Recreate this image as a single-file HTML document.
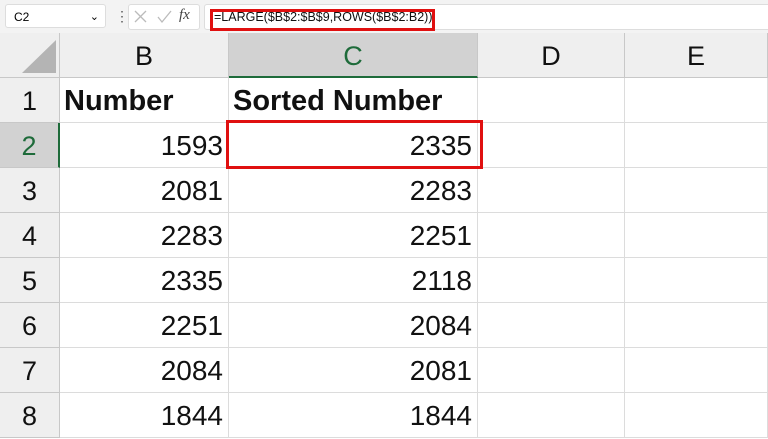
<!DOCTYPE html>
<html><head><style>
body{margin:0;width:768px;height:436px;overflow:hidden;background:#fff;font-family:"Liberation Sans",sans-serif;position:relative}
.top{position:absolute;left:0;top:0;width:768px;height:33px;background:#f3f3f3;border-bottom:1px solid #ddd}
.nb{position:absolute;left:5px;top:4px;width:101px;height:24px;background:#fff;border:1px solid #ddd;border-radius:3px;font-size:12px;line-height:24px;padding-left:8px;box-sizing:border-box}
.fb{position:absolute;left:204px;top:4px;width:564px;height:24px;background:#fff;border:1px solid #ddd;border-radius:3px 0 0 3px}
.ib{position:absolute;left:128px;top:4px;width:70px;height:24px;background:#fff;border:1px solid #ddd;border-radius:3px}
.rb{position:absolute;border:3px solid #e01010;box-sizing:border-box}
.cell{position:absolute;box-sizing:border-box;border-right:1px solid #dcdcdc;border-bottom:1px solid #dcdcdc;font-size:28px;line-height:46px;color:#111}
.h{background:#efefef;text-align:center;border-color:#c8c8c8;font-size:27px}
.r{text-align:right;padding-right:5px}
.b{font-weight:bold;padding-left:4px;font-size:29px}
</style></head><body>
<div class="top"></div>
<div class="nb">C2<span style="position:absolute;right:6px;top:0;font-size:11px">&#8964;</span></div>
<div style="position:absolute;left:115px;top:8px;font-size:14px;color:#555">&#8942;</div>
<div class="ib">
<svg width="70" height="24" style="position:absolute;left:0;top:0"><path d="M6 6l11 11M17 6L6 17" stroke="#bbb" stroke-width="1.3" fill="none"/><path d="M29 12l4 5 9-11" stroke="#bbb" stroke-width="1.3" fill="none"/></svg>
<span style="position:absolute;left:50px;top:2px;font-family:'Liberation Serif',serif;font-style:italic;font-size:15px;color:#444">fx</span></div>
<div class="fb"></div>
<div style="position:absolute;left:214px;top:10px;font-size:12.5px;color:#111">=LARGE($B$2:$B$9,ROWS($B$2:B2))</div>
<div class="rb" style="left:210px;top:9px;width:225px;height:22px"></div>
<div id="g"></div>
<script>
var cols=[[0,60],[60,169],[229,249],[478,147],[625,143]];
var hdr=["","B","C","D","E"];
var B=["Number","1593","2081","2283","2335","2251","2084","1844"];
var C=["Sorted Number","2335","2283","2251","2118","2084","2081","1844"];
var h="";
for(var i=0;i<5;i++){var c=cols[i];var st=i==2?"background:#d2d2d2;color:#1e6b3a;border-bottom:2px solid #1e6b3a;":"";
h+='<div class="cell h" style="left:'+c[0]+'px;top:33px;width:'+c[1]+'px;height:45px;'+st+'">'+hdr[i]+'</div>';}
h+='<svg style="position:absolute;left:22px;top:40px" width="36" height="34"><path d="M34 0L34 33L0 33Z" fill="#b4b4b4"/></svg>';
for(var r=0;r<8;r++){var t=78+r*45;
var st=r==1?"background:#d2d2d2;color:#1e6b3a;border-right:2px solid #1e6b3a;":"";
h+='<div class="cell h" style="left:0;top:'+t+'px;width:60px;height:45px;'+st+'">'+(r+1)+'</div>';
var cls=r==0?"b":"r";
h+='<div class="cell '+cls+'" style="left:60px;top:'+t+'px;width:169px;height:45px">'+B[r]+'</div>';
h+='<div class="cell '+cls+'" style="left:229px;top:'+t+'px;width:249px;height:45px">'+C[r]+'</div>';
h+='<div class="cell" style="left:478px;top:'+t+'px;width:147px;height:45px"></div>';
h+='<div class="cell" style="left:625px;top:'+t+'px;width:143px;height:45px"></div>';}
h+='<div class="rb" style="left:226px;top:120px;width:257px;height:49px"></div>';
document.getElementById("g").innerHTML=h;
</script>
</body></html>
